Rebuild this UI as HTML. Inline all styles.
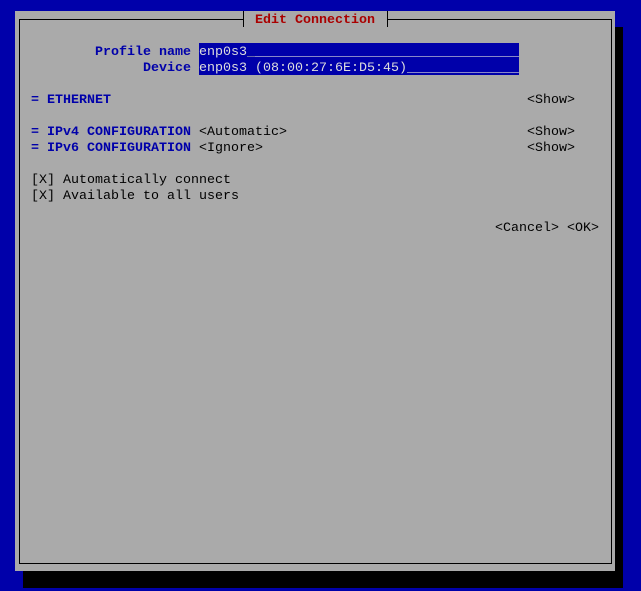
<!DOCTYPE html>
<html><head><meta charset="utf-8"><style>
html,body{margin:0;padding:0;width:641px;height:591px;overflow:hidden;background:#0000aa;}
body{position:relative;font-family:"Liberation Mono","DejaVu Sans Mono",monospace;font-size:13.33px;line-height:16px;}
.a{position:absolute;white-space:pre;height:16px;}
.b{color:#0000aa;font-weight:bold;}
.k{color:#000;}
.ln{position:absolute;background:#000;}
.t{position:absolute;left:0;top:2px;width:641px;height:589px;}
.f{position:absolute;white-space:pre;width:320px;height:14px;padding-top:2px;overflow:hidden;background:#0000aa;color:#dddddd;left:199px;}
</style></head><body>
<div style="position:absolute;left:23px;top:27px;width:600px;height:561px;background:#000"></div>
<div style="position:absolute;left:15px;top:11px;width:600px;height:560px;background:#aaaaaa"></div>
<div class="ln" style="left:19px;top:19px;width:224px;height:1px"></div>
<div class="ln" style="left:387px;top:19px;width:225px;height:1px"></div>
<div class="ln" style="left:243px;top:11px;width:1px;height:16px"></div>
<div class="ln" style="left:387px;top:11px;width:1px;height:16px"></div>
<div class="ln" style="left:19px;top:19px;width:1px;height:545px"></div>
<div class="ln" style="left:611px;top:19px;width:1px;height:545px"></div>
<div class="ln" style="left:19px;top:563px;width:593px;height:1px"></div>
<div class="f" style="top:43px">enp0s3<span style="color:#aaaaaa">_</span>_________________________________</div>
<div class="f" style="top:59px">enp0s3 (08:00:27:6E:D5:45)______________</div>
<div class="t">
<div class="a" style="left:255px;top:11px;color:#aa0000;font-weight:bold">Edit Connection</div>
<div class="a b" style="left:95px;top:43px">Profile name</div>
<div class="a b" style="left:143px;top:59px">Device</div>
<div class="a b" style="left:31px;top:91px">= ETHERNET</div>
<div class="a k" style="left:527px;top:91px">&lt;Show&gt;</div>
<div class="a" style="left:31px;top:123px"><span class="b">= IPv4 CONFIGURATION</span> <span class="k">&lt;Automatic&gt;</span></div>
<div class="a k" style="left:527px;top:123px">&lt;Show&gt;</div>
<div class="a" style="left:31px;top:139px"><span class="b">= IPv6 CONFIGURATION</span> <span class="k">&lt;Ignore&gt;</span></div>
<div class="a k" style="left:527px;top:139px">&lt;Show&gt;</div>
<div class="a k" style="left:31px;top:171px">[X] Automatically connect</div>
<div class="a k" style="left:31px;top:187px">[X] Available to all users</div>
<div class="a k" style="left:495px;top:219px">&lt;Cancel&gt; &lt;OK&gt;</div>
</div>
</body></html>
